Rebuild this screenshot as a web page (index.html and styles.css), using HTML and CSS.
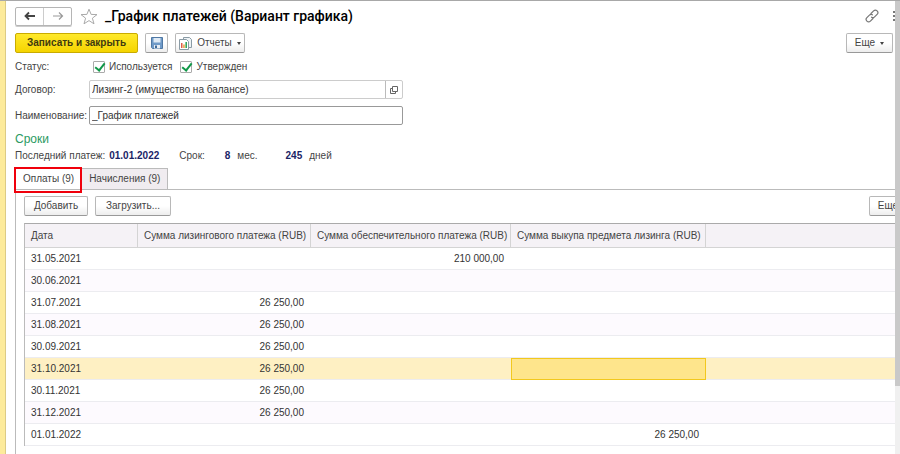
FILE: index.html
```html
<!DOCTYPE html>
<html lang="ru">
<head>
    <meta charset="utf-8">
    <title>График платежей</title>
    <link rel="stylesheet" href="styles.css">
</head>
<body>

    <div class="side-strip"></div>

    <main class="form">
        <header class="title-bar">
            <div class="nav-group">
                <button class="nav-btn" aria-label="Назад">
                    <svg width="12" height="10" viewBox="0 0 12 10"><path d="M11 5H2M5 1.5L1.5 5L5 8.5" fill="none" stroke="#444" stroke-width="1.8"/></svg>
                </button>
                <button class="nav-btn" aria-label="Вперед">
                    <svg width="12" height="10" viewBox="0 0 12 10"><path d="M1 5H10M7 1.5L10.5 5L7 8.5" fill="none" stroke="#999" stroke-width="1.2"/></svg>
                </button>
            </div>
            <svg class="star" width="18" height="17" viewBox="0 0 18 17"><path d="M9 1.2L11.1 6.4L17 6.6L12.4 10.2L14 15.8L9 12.6L4 15.8L5.6 10.2L1 6.6L6.9 6.4Z" fill="#fff" stroke="#aaa" stroke-width="1"/></svg>
            <h1 class="title">_График платежей (Вариант графика)</h1>
            <svg class="link-icon" width="14" height="14" viewBox="0 0 14 14"><g fill="none" stroke="#777" stroke-width="1.2" stroke-linecap="round"><path d="M6 4.5L8.6 1.9A2.4 2.4 0 0 1 12.1 5.4L9.6 7.9A2.3 2.3 0 0 1 6.6 8.2"/><path d="M8 9.5L5.4 12.1A2.4 2.4 0 0 1 1.9 8.6L4.4 6.1A2.3 2.3 0 0 1 7.4 5.8"/></g></svg>
            <svg class="dots" width="3" height="10" viewBox="0 0 3 10"><path d="M1 0H3V2H1ZM1 4H3V6H1ZM1 8H3V10H1Z" fill="#777"/></svg>
        </header>

        <div class="toolbar">
            <button class="btn btn-main">Записать и закрыть</button>
            <button class="btn btn-save" aria-label="Записать">
                <svg width="12" height="12" viewBox="0 0 12 12"><path d="M0.5 0.5H11.5V11.5H1.5L0.5 10.5Z" fill="#6f9ac8" stroke="#4f78a4"/><path d="M2.5 1H9.5V5.5H2.5Z" fill="#dfeaf5"/><path d="M3 8H9V11.5H3Z" fill="#e8eef5"/><path d="M4 8.5H6V11H4Z" fill="#3f6a98"/></svg>
            </button>
            <button class="btn btn-reports">
                <svg width="13" height="13" viewBox="0 0 13 13"><path d="M4.5 0.5H10.5L12.5 2.5V10.5H4.5Z" fill="#eef3f5" stroke="#8a9ba5"/><path d="M0.5 2.5H7.5L9.5 4.5V12.5H0.5Z" fill="#fff" stroke="#8a9ba5"/><path d="M2 6H3.5V11H2Z" fill="#e05a4a"/><path d="M4.2 7.5H5.7V11H4.2Z" fill="#e9a13b"/><path d="M6.4 5H8V11H6.4Z" fill="#35a860"/></svg>
                Отчеты <span class="caret"></span>
            </button>
            <button class="btn btn-more">Еще <span class="caret"></span></button>
        </div>

        <div class="row status-row">
            <span class="label">Статус:</span>
            <label class="check"><input type="checkbox" checked>Используется</label>
            <label class="check"><input type="checkbox" checked>Утвержден</label>
        </div>

        <div class="row">
            <label class="label" for="contract">Договор:</label>
            <div class="field">
                <input type="text" id="contract" value="Лизинг-2 (имущество на балансе)">
                <button class="open-btn" aria-label="Открыть">
                    <svg width="8" height="8" viewBox="0 0 8 8"><path d="M2.5 0.5H7.5V5.5H2.5ZM2.5 2.5H0.5V7.5H5.5V5.5" fill="none" stroke="#666"/></svg>
                </button>
            </div>
        </div>

        <div class="row">
            <label class="label" for="name">Наименование:</label>
            <div class="field field-active">
                <input type="text" id="name" value="_График платежей">
            </div>
        </div>

        <h2 class="section-title">Сроки</h2>
        <div class="terms">
            <span>Последний платеж:</span>
            <b class="term-date">01.01.2022</b>
            <span class="term-label">Срок:</span>
            <b class="term-months">8</b>
            <span>мес.</span>
            <b class="term-days">245</b>
            <span>дней</span>
        </div>

        <div class="tabs">
            <button class="tab tab-active">Оплаты (9)</button>
            <button class="tab">Начисления (9)</button>
        </div>

        <section class="panel">
            <div class="panel-toolbar">
                <button class="btn btn-add">Добавить</button>
                <button class="btn btn-load">Загрузить...</button>
                <button class="btn btn-more">Еще <span class="caret"></span></button>
            </div>

            <table class="payments">
                <colgroup>
                    <col class="col-date">
                    <col class="col-lease">
                    <col class="col-deposit">
                    <col class="col-buyout">
                    <col>
                </colgroup>
                <thead>
                    <tr>
                        <th>Дата</th>
                        <th>Сумма лизингового платежа (RUB)</th>
                        <th>Сумма обеспечительного платежа (RUB)</th>
                        <th>Сумма выкупа предмета лизинга (RUB)</th>
                        <th></th>
                    </tr>
                </thead>
                <tbody>
                    <tr><td>31.05.2021</td><td></td><td>210 000,00</td><td></td><td></td></tr>
                    <tr><td>30.06.2021</td><td></td><td></td><td></td><td></td></tr>
                    <tr><td>31.07.2021</td><td>26 250,00</td><td></td><td></td><td></td></tr>
                    <tr><td>31.08.2021</td><td>26 250,00</td><td></td><td></td><td></td></tr>
                    <tr><td>30.09.2021</td><td>26 250,00</td><td></td><td></td><td></td></tr>
                    <tr class="selected"><td>31.10.2021</td><td>26 250,00</td><td></td><td class="current"></td><td></td></tr>
                    <tr><td>30.11.2021</td><td>26 250,00</td><td></td><td></td><td></td></tr>
                    <tr><td>31.12.2021</td><td>26 250,00</td><td></td><td></td><td></td></tr>
                    <tr><td>01.01.2022</td><td></td><td></td><td>26 250,00</td><td></td></tr>
                </tbody>
            </table>
        </section>
    </main>

    <div class="scrollbar"><div class="thumb"></div></div>

</body>
</html>
```
FILE: styles.css
```css
* {
    box-sizing: border-box;
}
body {
    display: flex;
    height: 100vh;
    margin: 0;
    overflow: hidden;
    border-top: 1px solid #a8a8a8;
    font-family: "Liberation Sans", Arial, sans-serif;
    font-size: 10px;
    line-height: 14px;
    color: #444;
    background-color: #fff;
}
button, input {
    font: inherit;
    color: inherit;
    margin: 0;
}
.side-strip {
    flex: none;
    width: 6px;
    background-color: #fdeb9b;
    border-right: 1px solid #dccb85;
}
.form {
    flex: 1;
    min-width: 0;
    display: flex;
    flex-direction: column;
    padding: 5px 0 0 9px;
    overflow: hidden;
}
.scrollbar {
    flex: none;
    width: 5px;
    background-color: #f0f0f0;
}
.thumb {
    height: 85%;
    background-color: #c9c9c9;
}

/* title */
.title-bar {
    display: flex;
    align-items: center;
    height: 20px;
}
.nav-group {
    display: flex;
    width: 57px;
    height: 19px;
    border: 1px solid #b5b5b5;
    border-radius: 2px;
    box-shadow: 0 1px 0 #ccc;
}
.nav-btn {
    flex: 1;
    display: flex;
    align-items: center;
    justify-content: center;
    padding: 0;
    border: none;
    background: none;
}
.nav-btn + .nav-btn {
    border-left: 1px solid #ccc;
}
.star {
    margin: 0 7px 0 8px;
}
.title {
    margin: 0;
    font-family: Roboto, Arial, sans-serif;
    font-size: 14px;
    font-weight: 500;
    line-height: 20px;
    color: #000;
}
.link-icon {
    margin-left: auto;
}
.dots {
    margin-left: 13px;
}

/* buttons */
.toolbar {
    display: flex;
    margin-top: 7px;
    padding-right: 2px;
}
.btn {
    display: flex;
    align-items: center;
    justify-content: center;
    flex: none;
    height: 20px;
    padding: 0;
    border: 1px solid #b8b8b8;
    border-bottom-color: #999;
    border-radius: 2px;
    background: linear-gradient(#fff 50%, #ededed);
    white-space: nowrap;
}
.btn-main {
    width: 123px;
    border-color: #c9ab00;
    background: linear-gradient(#ffe92b, #f5d400);
    font-weight: bold;
    color: #3f3a10;
}
.btn-save {
    width: 23px;
    margin-left: 7px;
}
.btn-reports {
    width: 70px;
    margin-left: 7px;
    gap: 5px;
}
.btn-more {
    width: 47px;
    margin-left: auto;
    gap: 5px;
}
.caret {
    border: 2px solid transparent;
    border-top: 3px solid #444;
    border-bottom: none;
}

/* fields */
.row {
    display: flex;
    align-items: center;
    height: 19px;
    margin-top: 7px;
}
.label {
    flex: none;
    width: 74px;
}
.status-row {
    height: 13px;
}
.status-row .label {
    width: 78px;
}
.check {
    display: flex;
    align-items: center;
    gap: 4px;
    margin-right: 8px;
}
.check input {
    appearance: none;
    width: 12px;
    height: 12px;
    border: 1px solid #aaa;
    border-radius: 1px;
    position: relative;
}
.check input:checked::after {
    content: "";
    position: absolute;
    left: 3px;
    top: -1px;
    width: 4px;
    height: 8px;
    border: solid #109848;
    border-width: 0 2px 2px 0;
    transform: rotate(38deg);
}
.field {
    display: flex;
    width: 314px;
    height: 19px;
    border: 1px solid #ccc;
    border-radius: 2px;
}
.field-active {
    border-color: #999;
}
.field input {
    flex: 1;
    min-width: 0;
    padding: 0 2px;
    border: none;
    background: none;
    outline: none;
    color: #333;
}
.open-btn {
    display: flex;
    align-items: center;
    justify-content: center;
    width: 17px;
    padding: 0;
    border: none;
    border-left: 1px solid #bbb;
    background: none;
}
.section-title {
    margin: 6px 0 0;
    font-size: 12px;
    font-weight: normal;
    line-height: 16px;
    color: #2b9a62;
}
.terms {
    display: flex;
    margin-top: 2px;
}
.terms b {
    color: #1a2466;
}
.term-date {
    margin-left: 4px;
}
.term-label {
    margin-left: 20px;
}
.term-months {
    margin: 0 7px 0 20px;
}
.term-days {
    margin: 0 7px 0 28px;
}

/* tabs */
.tabs {
    display: flex;
    margin-top: 5px;
}
.tab {
    height: 21px;
    padding: 0 7px;
    border: 1px solid #bbb;
    border-bottom: none;
    border-left: none;
    background-color: #f0ecf0;
}
.tab-active {
    position: relative;
    border-left: 1px solid #bbb;
    background-color: #fff;
}
/* marked tab */
.tab-active::after {
    content: "";
    position: absolute;
    inset: -2px -1px -4px -2px;
    border: 2px solid #f0000c;
}
.panel {
    flex: 1;
    border-top: 1px solid #bbb;
    border-left: 1px solid #bbb;
    padding: 6px 0 0 8px;
}
.panel-toolbar {
    display: flex;
    gap: 7px;
    /* the list is wider than the window */
    margin-right: -21px;
}
.btn-add {
    width: 64px;
}
.btn-load {
    width: 76px;
}

/* table */
.payments {
    width: 100%;
    margin-top: 7px;
    table-layout: fixed;
    border-collapse: separate;
    border-spacing: 0;
    border-left: 1px solid #bbb;
    border-top: 1px solid #aaa;
}
.col-date {
    width: 113px;
}
.col-lease {
    width: 173px;
}
.col-deposit {
    width: 200px;
}
.col-buyout {
    width: 195px;
}
.payments th {
    height: 24px;
    padding: 0 6px;
    border-right: 1px solid #d4d4d4;
    border-bottom: 1px solid #d4d4d4;
    background-color: #f5f2f6;
    font-weight: normal;
    text-align: left;
    white-space: nowrap;
}
.payments td {
    height: 22px;
    padding: 0 7px 0 6px;
    border-bottom: 1px solid #ececf0;
    text-align: right;
    color: #333;
}
.payments td:first-child {
    text-align: left;
}
.payments th:last-child {
    border-right: none;
}
.payments tr:nth-child(even) td {
    background-color: #fdfafe;
}
.payments tr.selected td {
    background-color: #fef0c3;
}
.payments tr.selected td.current {
    border: 1px solid #f2c81e;
    background-color: #fee58c;
}
```
